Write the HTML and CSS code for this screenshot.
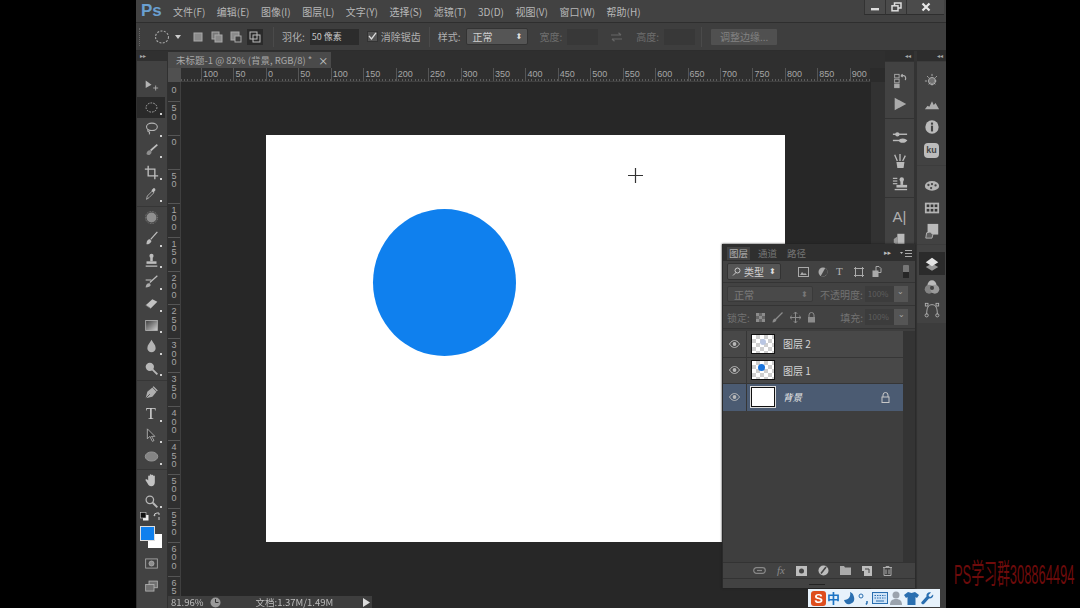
FILE: index.html
```html
<!DOCTYPE html>
<html lang="zh">
<head>
<meta charset="utf-8">
<title>Photoshop</title>
<link rel="stylesheet" href="styles.css">
</head>
<body>
<div class="side"></div>
<div class="app">
  <header class="menubar">
    <div class="logo">Ps</div>
    <nav class="menu">
      <span>文件(F)</span><span>编辑(E)</span><span>图像(I)</span><span>图层(L)</span><span>文字(Y)</span><span>选择(S)</span><span>滤镜(T)</span><span>3D(D)</span><span>视图(V)</span><span>窗口(W)</span><span>帮助(H)</span>
    </nav>
    <div class="winbtns">
      <div class="winbtn"><svg width="10" height="10" viewBox="0 0 10 10"><rect x="1" y="6" width="8" height="2.4" fill="#ddd"/></svg></div>
      <div class="winbtn"><svg width="11" height="10" viewBox="0 0 11 10" fill="none" stroke="#ddd" stroke-width="1.5"><rect x="3.5" y="1" width="6.5" height="5"/><rect x="1" y="3.8" width="6" height="5" fill="#4a4a4a"/></svg></div>
      <div class="winbtn close"><svg width="10" height="10" viewBox="0 0 10 10" stroke="#e8e8e8" stroke-width="2.2"><path d="M1.5 1.5l7 7M8.5 1.5l-7 7"/></svg></div>
    </div>
  </header>

  <div class="options">
    <div class="grip"></div>
    <svg class="opt-ellipse" width="16" height="14" viewBox="0 0 16 14" fill="none" stroke="#a8a8a8" stroke-width="1.1" stroke-dasharray="2 1.4"><ellipse cx="8" cy="7" rx="6.5" ry="6"/></svg>
    <svg class="opt-caret" width="6" height="4" viewBox="0 0 6 4"><path d="M0 0h6L3 4z" fill="#ccc"/></svg>
    <div class="modes">
      <span class="mode"><svg width="12" height="12" viewBox="0 0 12 12"><rect x="2" y="2" width="8" height="8" fill="#8a8a8a" stroke="#aaa"/></svg></span>
      <span class="mode"><svg width="12" height="12" viewBox="0 0 12 12"><rect x="1" y="1" width="7" height="7" fill="#777" stroke="#aaa"/><rect x="4" y="4" width="7" height="7" fill="#8a8a8a" stroke="#aaa"/></svg></span>
      <span class="mode"><svg width="12" height="12" viewBox="0 0 12 12"><rect x="1" y="1" width="8" height="8" fill="#8a8a8a" stroke="#aaa"/><rect x="5" y="5" width="6" height="6" fill="#3e3e3e" stroke="#aaa"/></svg></span>
      <span class="mode on"><svg width="12" height="12" viewBox="0 0 12 12" fill="none" stroke="#bbb"><rect x="1" y="1" width="7" height="7"/><rect x="4" y="4" width="7" height="7"/></svg></span>
    </div>
    <div class="vsep sep-a"></div>
    <span class="lbl feather">羽化:</span>
    <div class="field f-feather">50 像素</div>
    <div class="check"><svg width="9" height="9" viewBox="0 0 9 9" fill="none" stroke="#ddd" stroke-width="1.3"><path d="M1 4l2.5 3L8 .8"/></svg></div>
    <span class="lbl aa">消除锯齿</span>
    <div class="vsep sep-b"></div>
    <span class="lbl style">样式:</span>
    <div class="select s-style"><span>正常</span><i class="updown">⬍</i></div>
    <span class="lbl dim w-l">宽度:</span>
    <div class="field empty"></div>
    <svg class="swap" width="13" height="10" viewBox="0 0 13 10" fill="none" stroke="#666" stroke-width="1.2"><path d="M1 3h10M8.5 .8L11 3M12 7H2M4.500 9.200L2 7"/></svg>
    <span class="lbl dim h-l">高度:</span>
    <div class="field empty"></div>
    <div class="vsep sep-c"></div>
    <div class="refine">调整边缘...</div>
  </div>

  <div class="main">
    <aside class="toolcol">
      <div class="collapse">▸▸</div>
      <div class="tools">
        <div class="ghead"></div>
        <div class="tgroup">
          <div class="tool"><svg viewBox="0 0 18 18"><path d="M2 3l7 5-7 4z" fill="#c4c4c4"/><path d="M11 12h6M14 9v6" stroke="#c4c4c4"/></svg></div>
          <div class="tool on"><svg viewBox="0 0 18 18" fill="none" stroke="#cfcfcf" stroke-dasharray="2 1.300"><ellipse cx="9" cy="9" rx="6.500" ry="5.500"/></svg></div>
          <div class="tool"><svg viewBox="0 0 18 18" fill="none" stroke="#c4c4c4" stroke-width="1.300"><ellipse cx="9.500" cy="7" rx="6.500" ry="4.500"/><path d="M5 10c-1 2 0 3 1 3s1 2 0 3"/></svg></div>
          <div class="tool"><svg viewBox="0 0 18 18" fill="none"><path d="M16 2L8 9" stroke="#d0d0d0" stroke-width="2"/><path d="M3 13c0-3 3-5 5-4s1 4-1 5-4 0-4-1z" fill="#999"/></svg></div>
          <div class="tool"><svg viewBox="0 0 18 18" fill="none" stroke="#cfcfcf" stroke-width="1.600"><path d="M5 1v12h12M1 5h12v12"/></svg></div>
          <div class="tool"><svg viewBox="0 0 18 18"><path d="M3 16l1-4 6-6 2 2-6 6z" fill="none" stroke="#c8c8c8"/><path d="M9 5l2-2c1-2 4 1 2 3l-2 2z" fill="#d0d0d0"/></svg></div>
        </div>
        <div class="tgroup">
          <div class="tool"><svg viewBox="0 0 18 18"><circle cx="9" cy="9" r="6" fill="#9a9a9a"/><circle cx="9" cy="9" r="7.300" fill="none" stroke="#999" stroke-dasharray="1 1"/></svg></div>
          <div class="tool"><svg viewBox="0 0 18 18"><path d="M16 1L8 10" stroke="#d0d0d0" stroke-width="1.500"/><path d="M3 16c0-3 1-6 4-6l2 2c-1 3-3 4-6 4z" fill="#cfcfcf"/></svg></div>
          <div class="tool"><svg viewBox="0 0 18 18" fill="#cfcfcf"><circle cx="9" cy="3.500" r="2.500"/><rect x="7.500" y="5" width="3" height="5"/><rect x="3" y="10" width="12" height="3"/><rect x="2" y="15" width="14" height="1.500"/></svg></div>
          <div class="tool"><svg viewBox="0 0 18 18"><path d="M16 1L7 9" stroke="#d0d0d0" stroke-width="1.500"/><path d="M2 15c0-3 2-6 5-5l1 2c0 2-3 3-6 3z" fill="#bbb"/><path d="M2 6h7" stroke="#bbb" stroke-width="1.500"/></svg></div>
          <div class="tool"><svg viewBox="0 0 18 18"><path d="M2 11l8-7 6 3-8 8z" fill="#d4d4d4"/><path d="M2 11l6 4" stroke="#777"/></svg></div>
          <div class="tool"><svg viewBox="0 0 18 18"><defs><linearGradient id="grad" x1="0" y1="0" x2="1" y2="1"><stop offset="0" stop-color="#3a3a3a"/><stop offset="1" stop-color="#e4e4e4"/></linearGradient></defs><rect x="2" y="3" width="14" height="12" fill="url(#grad)" stroke="#c4c4c4"/></svg></div>
          <div class="tool"><svg viewBox="0 0 18 18"><path d="M9 1c2 4 5 6 5 10a5 5 0 0 1-10 0c0-4 3-6 5-10z" fill="#c4c4c4"/></svg></div>
          <div class="tool"><svg viewBox="0 0 18 18"><circle cx="7" cy="7" r="5" fill="#c8c8c8"/><path d="M10 10l6 6" stroke="#c8c8c8" stroke-width="2.200"/></svg></div>
        </div>
        <div class="tgroup">
          <div class="tool"><svg viewBox="0 0 18 18"><path d="M2 16l2-8 6-5 5 5-5 6z" fill="#bdbdbd"/><path d="M2 16l5-5" stroke="#444"/><path d="M11 2l5 5" stroke="#ccc" stroke-width="1.500"/></svg></div>
          <div class="tool ttext">T</div>
          <div class="tool"><svg viewBox="0 0 18 18"><path d="M4 1v12l3-3 3 6 2-1-3-5h4z" fill="#333" stroke="#c8c8c8"/></svg></div>
          <div class="tool"><svg viewBox="0 0 18 18"><ellipse cx="9" cy="9" rx="7.500" ry="5.500" fill="#8e8e8e" stroke="#aaa"/></svg></div>
        </div>
        <div class="tgroup last">
          <div class="tool"><svg viewBox="0 0 18 18" fill="#d4d4d4"><path d="M5 9V4a1 1 0 0 1 2 0V2.500a1 1 0 0 1 2 0V3a1 1 0 0 1 2 0v1a1 1 0 0 1 2 0v7c0 3-2 5-4 5-3 0-4-2-5-4L2 9c-1-2 2-2 3 0z"/></svg></div>
          <div class="tool t-zoom"><svg viewBox="0 0 18 18" fill="none" stroke="#c8c8c8" stroke-width="1.500"><circle cx="7" cy="7" r="4.500"/><path d="M10.500 10.500L16 16" stroke-width="2.400"/></svg></div>
        </div>
        <div class="swapset">
          <svg width="9" height="9" viewBox="0 0 9 9"><rect x="3" y="3" width="5.500" height="5.500" fill="#eee"/><rect x=".5" y=".5" width="5.500" height="5.500" fill="#111" stroke="#ccc" stroke-width=".6"/></svg>
          <svg width="9" height="9" viewBox="0 0 9 9" fill="none" stroke="#c8c8c8"><path d="M1 4a3 3 0 0 1 3-3h2M6 8V5M1 4l1.500-1M6 1v2"/></svg>
        </div>
        <div class="swatches"><div class="bgc"></div><div class="fgc"></div></div>
        <div class="tool mask"><svg viewBox="0 0 18 18" fill="none" stroke="#bdbdbd"><rect x="2" y="3.500" width="14" height="11"/><circle cx="9" cy="9" r="3" fill="#999"/></svg></div>
        <div class="tool screen"><svg viewBox="0 0 18 18" fill="#777" stroke="#c4c4c4"><rect x="6" y="2.500" width="10" height="8"/><rect x="2" y="6.500" width="10" height="8"/></svg></div>
      </div>
    </aside>

    <section class="docarea">
      <div class="tabrow"><div class="tab"><span>未标题-1 @ 82% (背景, RGB/8) *</span><b>×</b></div></div>
      <div class="hruler-row">
        <div class="corner"></div>
        <div class="hruler">
          <div class="hticks">
            <span></span><span>100</span><span>50</span><span>0</span><span>50</span><span>100</span><span>150</span><span>200</span><span>250</span><span>300</span><span>350</span><span>400</span><span>450</span><span>500</span><span>550</span><span>600</span><span>650</span><span>700</span><span>750</span><span>800</span><span>850</span><span>900</span>
          </div>
        </div>
      </div>
      <div class="body-row">
        <div class="vruler">
          <div class="vticks">
            <span class="vfirst">0</span><span>50</span><span>0</span><span>50</span><span>100</span><span>150</span><span>200</span><span>250</span><span>300</span><span>350</span><span>400</span><span>450</span><span>500</span><span>550</span><span>600</span><span>65</span>
          </div>
        </div>
        <div class="workspace">
          <div class="document">
            <div class="circle"></div>
            <svg class="cursor" width="15" height="15" viewBox="0 0 15 15"><path d="M7.500 0v15M0 7.500h15" stroke="#333" stroke-width="1.200"/></svg>
          </div>
        </div>
      </div>
      <footer class="status">
        <div class="st-left">
          <span class="zoom">81.96%</span>
          <span class="st-ico"><svg width="11" height="11" viewBox="0 0 11 11"><circle cx="5.500" cy="5.500" r="5" fill="#9a9a9a"/><path d="M5.500 2v3.500h3" stroke="#333" fill="none"/></svg></span>
          <span class="docinfo">文档:1.37M/1.49M</span>
          <svg class="st-arrow" width="7" height="9" viewBox="0 0 7 9"><path d="M0 0l7 4.500L0 9z" fill="#ddd"/></svg>
        </div>
      </footer>
    </section>

    <aside class="dock">
      <div class="dock-col">
        <div class="dock-head">◂◂</div>
        <div class="dgroup g56">
          <div class="dico"><svg viewBox="0 0 18 18" fill="none" stroke="#c0c0c0"><rect x="3" y="1.500" width="5" height="4"/><rect x="3" y="7" width="5" height="4"/><rect x="3" y="12.500" width="5" height="4" fill="#bbb"/><path d="M10 3h3c2 0 3 2 2 5M10 3l2-1.500M10 3l2 1.500" stroke-width="1.400"/></svg></div>
          <div class="dico"><svg viewBox="0 0 18 18"><path d="M3 2l13 7-13 7z" fill="#bdbdbd"/></svg></div>
        </div>
        <div class="dgroup g78">
          <div class="dico"><svg viewBox="0 0 18 18" fill="#cfcfcf"><rect x="1" y="4" width="16" height="1.600"/><rect x="1" y="11" width="16" height="1.600"/><circle cx="6" cy="5" r="2.400"/><ellipse cx="12" cy="12" rx="4" ry="2.400"/></svg></div>
          <div class="dico"><svg viewBox="0 0 18 18" fill="#cfcfcf"><path d="M5 10h9l-1 7H6z"/><path d="M6 9L3 2M9 9V1M12 9l3-6" stroke="#cfcfcf" stroke-width="1.500"/></svg></div>
          <div class="dico"><svg viewBox="0 0 18 18" fill="#cfcfcf"><rect x="1" y="2" width="5" height="1.300"/><rect x="1" y="5" width="5" height="1.300"/><rect x="1" y="8" width="5" height="1.300"/><circle cx="11" cy="4" r="2.500"/><rect x="9.500" y="5" width="3" height="5"/><rect x="5" y="10" width="12" height="3"/><rect x="3" y="14.500" width="14" height="1.500"/></svg></div>
        </div>
        <div class="dgroup g47">
          <div class="dico dtext">A|</div>
          <div class="dico"><svg viewBox="0 0 18 18"><rect x="6" y="2" width="8" height="14" fill="#cfcfcf"/><path d="M6 5L2 8v4l4 3z" fill="#aaa"/></svg></div>
        </div>
      </div>
      <div class="dock-col">
        <div class="dock-head">◂◂</div>
        <div class="dgroup g103">
          <div class="dico"><svg viewBox="0 0 18 18" fill="none" stroke="#c8c8c8"><circle cx="9" cy="9" r="4" fill="#777"/><path d="M9 1v16M1 9h16M3.500 3.500l11 11M14.500 3.500l-11 11" stroke-dasharray="2.500 8 2.500 8"/></svg></div>
          <div class="dico"><svg viewBox="0 0 18 18"><path d="M1 15l3-4 2 1 3-6 2 4 2-2 4 7z" fill="#c0c0c0"/></svg></div>
          <div class="dico"><svg viewBox="0 0 18 18"><circle cx="9" cy="9" r="7.500" fill="#d0d0d0"/><rect x="7.800" y="7.500" width="2.400" height="6.500" fill="#444"/><rect x="7.800" y="4" width="2.400" height="2.400" fill="#444"/></svg></div>
          <div class="dico ku"><span>ku</span></div>
        </div>
        <div class="dgroup g78">
          <div class="dico"><svg viewBox="0 0 18 18"><ellipse cx="9" cy="10" rx="8" ry="5.500" fill="#c8c8c8"/><circle cx="5" cy="9" r="1.300" fill="#444"/><circle cx="9" cy="8" r="1.300" fill="#444"/><circle cx="13" cy="9.500" r="1.300" fill="#444"/><circle cx="8" cy="12.500" r="1.300" fill="#444"/></svg></div>
          <div class="dico"><svg viewBox="0 0 18 18"><rect x="1" y="3" width="16" height="12" fill="#c8c8c8"/><g fill="#333"><rect x="3" y="5" width="3" height="3"/><rect x="7.500" y="5" width="3" height="3"/><rect x="12" y="5" width="3" height="3"/><rect x="3" y="10" width="3" height="3"/><rect x="7.500" y="10" width="3" height="3"/><rect x="12" y="10" width="3" height="3"/></g></svg></div>
          <div class="dico"><svg viewBox="0 0 18 18"><rect x="4" y="1" width="12" height="12" fill="#cfcfcf"/><path d="M2 17l1-6 4-1 3 3-1 4z" fill="#666" stroke="#cfcfcf"/></svg></div>
        </div>
        <div class="dgroup g78">
          <div class="dico active"><svg viewBox="0 0 18 18"><path d="M9 8.500L2 12.500l7 4 7-4z" fill="#999"/><path d="M9 2L2 7l7 4.500L16 7z" fill="#e4e4e4"/></svg></div>
          <div class="dico"><svg viewBox="0 0 18 18"><circle cx="9" cy="6.500" r="5" fill="#d0d0d0"/><circle cx="5.800" cy="11.500" r="5" fill="#8f8f8f"/><circle cx="12.200" cy="11.500" r="5" fill="#aaa"/><circle cx="9" cy="10" r="2.300" fill="#444"/></svg></div>
          <div class="dico"><svg viewBox="0 0 18 18" fill="none" stroke="#c8c8c8"><path d="M3 14C3 6 5 3 9 3s6 3 6 11"/><rect x="1.500" y="1.500" width="3" height="3"/><rect x="13.500" y="1.500" width="3" height="3"/><circle cx="3" cy="15" r="1.800"/><circle cx="15" cy="15" r="1.800"/></svg></div>
        </div>
      </div>
    </aside>

    <section class="layers">
      <div class="lp-tabs">
        <span class="lp-tab on">图层</span><span class="lp-tab">通道</span><span class="lp-tab">路径</span>
        <span class="lp-spacer"></span>
        <span class="lp-more">▸▸</span>
        <svg class="lp-menu" width="12" height="7" viewBox="0 0 12 7"><path d="M0 2h3L1.500 4z" fill="#bbb"/><path d="M5 .5h7M5 3.500h7M5 6.500h7" stroke="#aaa"/></svg>
      </div>
      <div class="lp-filter">
        <div class="select s-kind"><svg width="9" height="9" viewBox="0 0 9 9" fill="none" stroke="#ccc"><circle cx="5.500" cy="3.500" r="2.500"/><path d="M4 5.500L1 8.500"/></svg><span>类型</span><i class="updown">⬍</i></div>
        <div class="filter-icons">
          <svg width="11" height="10" viewBox="0 0 11 10"><rect x=".5" y=".5" width="10" height="9" fill="none" stroke="#aaa"/><path d="M2 8l2-3 2 2 1-1 2 2z" fill="#aaa"/></svg>
          <svg width="10" height="10" viewBox="0 0 10 10"><circle cx="5" cy="5" r="4.500" fill="#aaa"/><path d="M5 .5a4.500 4.500 0 0 1 0 9z" fill="#444" transform="rotate(30 5 5)"/></svg>
          <span class="fi-t">T</span>
          <svg width="10" height="10" viewBox="0 0 10 10" fill="none" stroke="#aaa"><rect x="1.500" y="1.500" width="7" height="7"/><path d="M0 1.500h3M1.500 0v3M7 1.500h3M8.500 0v3M0 8.500h3M1.500 7v3M7 8.500h3M8.500 7v3"/></svg>
          <svg width="10" height="11" viewBox="0 0 10 11" fill="none" stroke="#aaa"><path d="M4 .5h3l2 2v4H4z"/><rect x="1" y="5" width="5" height="5.500" fill="#aaa"/></svg>
        </div>
        <div class="toggle"><i></i></div>
      </div>
      <div class="lp-row dimrow">
        <div class="select s-mode"><span>正常</span><i class="updown">⬍</i></div>
        <span class="rlabel op">不透明度:</span>
        <div class="pct">100%</div><div class="pctbtn">⌄</div>
      </div>
      <div class="lp-row dimrow lockrow">
        <span class="rlabel lock">锁定:</span>
        <div class="lock-icons">
          <svg width="11" height="11" viewBox="0 0 11 11"><rect x="1" y="1" width="9" height="9" fill="#666"/><path d="M1 1h3v3H1zM7 1h3v3H7zM4 4h3v3H4zM1 7h3v3H1zM7 7h3v3H7z" fill="#8c8c8c"/></svg>
          <svg width="11" height="11" viewBox="0 0 11 11"><path d="M10.500.5L4 7" stroke="#8c8c8c" stroke-width="1.200"/><path d="M.5 10.500c0-2 1-4 3-4l1 1c0 2-2 3-4 3z" fill="#8c8c8c"/></svg>
          <svg width="11" height="11" viewBox="0 0 11 11" stroke="#8c8c8c" fill="none"><path d="M5.500 0v11M0 5.500h11M3.800 1.800L5.500 0l1.700 1.800M3.800 9.200L5.500 11l1.700-1.800M1.800 3.800L0 5.500l1.800 1.700M9.200 3.800L11 5.500 9.200 7.200"/></svg>
          <svg width="9" height="11" viewBox="0 0 9 11"><path d="M2 5V3a2.500 2.500 0 0 1 5 0v2" fill="none" stroke="#8c8c8c"/><rect x="1" y="5" width="7" height="5.500" fill="#8c8c8c"/></svg>
        </div>
        <span class="rlabel fill">填充:</span>
        <div class="pct">100%</div><div class="pctbtn">⌄</div>
      </div>
      <div class="lp-list">
        <div class="list-main">
          <div class="layer">
            <div class="eye"><svg width="11" height="8" viewBox="0 0 11 8"><path d="M.5 4C2 1.500 4 .5 5.500 .5S9 1.500 10.500 4C9 6.500 7 7.500 5.500 7.500S2 6.500 .5 4z" fill="none" stroke="#b8b8b8"/><circle cx="5.500" cy="4" r="1.900" fill="#b8b8b8"/></svg></div>
            <div class="thumb check-bg"><i class="smudge"></i></div>
            <div class="lname">图层 2</div>
          </div>
          <div class="layer">
            <div class="eye"><svg width="11" height="8" viewBox="0 0 11 8"><path d="M.5 4C2 1.500 4 .5 5.500 .5S9 1.500 10.500 4C9 6.500 7 7.500 5.500 7.500S2 6.500 .5 4z" fill="none" stroke="#b8b8b8"/><circle cx="5.500" cy="4" r="1.900" fill="#b8b8b8"/></svg></div>
            <div class="thumb check-bg"><i class="dot"></i></div>
            <div class="lname">图层 1</div>
          </div>
          <div class="layer selected">
            <div class="eye"><svg width="11" height="8" viewBox="0 0 11 8"><path d="M.5 4C2 1.500 4 .5 5.500 .5S9 1.500 10.500 4C9 6.500 7 7.500 5.500 7.500S2 6.500 .5 4z" fill="none" stroke="#b8b8b8"/><circle cx="5.500" cy="4" r="1.900" fill="#b8b8b8"/></svg></div>
            <div class="thumb white"></div>
            <div class="lname bgname">背景</div>
            <svg class="layer-lock" width="9" height="11" viewBox="0 0 9 11"><path d="M2 5V3a2.500 2.500 0 0 1 5 0v2" fill="none" stroke="#c8c8c8"/><rect x="1" y="5" width="7" height="5.500" fill="none" stroke="#c8c8c8"/></svg>
          </div>
        </div>
        <div class="list-scroll"></div>
      </div>
      <div class="lp-foot">
        <svg width="13" height="7" viewBox="0 0 13 7" fill="none" stroke="#888" stroke-width="1.200"><rect x=".7" y=".7" width="11.600" height="5.600" rx="2.800"/><path d="M4 3.500h5"/></svg>
        <span class="fx">fx</span>
        <svg width="11" height="10" viewBox="0 0 11 10"><rect width="11" height="10" fill="#bdbdbd"/><circle cx="5.500" cy="5" r="2.500" fill="#444"/></svg>
        <svg width="11" height="11" viewBox="0 0 11 11"><circle cx="5.500" cy="5.500" r="5" fill="#bdbdbd"/><path d="M8 2L3 8.500" stroke="#444" stroke-width="1.600"/></svg>
        <svg width="11" height="9" viewBox="0 0 11 9"><path d="M0 0h4l1 1.500h6V9H0z" fill="#aaa"/></svg>
        <svg width="10" height="10" viewBox="0 0 10 10"><path d="M0 0h10v10H2V5H0z" fill="#bdbdbd"/><path d="M3 3h4v4" stroke="#444" fill="none"/></svg>
        <svg width="9" height="10" viewBox="0 0 9 10" fill="none" stroke="#aaa"><path d="M0 1.500h9M3 1.500V.5h3v1M1 1.500h7V9.500H1zM3 3.500v4.500M6 3.500v4.500"/></svg>
      </div>
      <div class="lp-end"><i></i></div>
    </section>
  </div>
</div>
<div class="side right">
  <div class="watermark">PS学习群308864494</div>
</div>
<div class="tray">
  <span class="sogou">S</span>
  <span class="zh">中</span>
  <svg width="13" height="13" viewBox="0 0 13 13"><path d="M8 0c1 4-1 8-6 8 1 3 3 5 6 4s5-3 4-7-2-4-4-5z" fill="#2a6fb0"/></svg>
  <svg width="13" height="13" viewBox="0 0 13 13" fill="none" stroke="#2a6fb0"><circle cx="4" cy="4" r="2"/><path d="M10 9v2l-1 1.500" stroke-width="1.500"/></svg>
  <svg width="16" height="12" viewBox="0 0 16 12"><rect x=".5" y=".5" width="15" height="11" fill="#cfe4f7" stroke="#2a6fb0"/><path d="M2.500 3.500h11M2.500 6h11" stroke="#2a6fb0" stroke-dasharray="1.500 1"/><path d="M4 9h8" stroke="#2a6fb0"/></svg>
  <svg width="12" height="14" viewBox="0 0 12 14" fill="#9aa3ad"><circle cx="6" cy="4" r="3.500"/><path d="M0 14c0-4 2-6 6-6s6 2 6 6z"/></svg>
  <svg width="15" height="13" viewBox="0 0 15 13"><path d="M4 0l3.500 1L11 0l4 3-2 3-1.500-1v8h-8V5L2 6 0 3z" fill="#2a6fb0"/></svg>
  <svg width="13" height="13" viewBox="0 0 13 13"><path d="M12 2.500L9.500 5 8 4.500 7.500 3 10 .5C7.500-.5 5 1.500 5.500 4.500L.5 10c-1 1.500 1 3 2.500 2l5-5.500c3 .5 5-2 4-4z" fill="#2a6fb0"/></svg>
</div>
</body>
</html>
```

FILE: styles.css
```css
* { box-sizing: border-box; }
html, body { margin: 0; padding: 0; }
body {
  width: 1080px; height: 608px; overflow: hidden; background: #000;
  display: flex; position: relative;
  font-family: "Noto Sans CJK SC", "Liberation Sans", sans-serif;
  color: #b4b4b4; font-size: 10px;
}
.side { width: 136px; flex: none; background: #000; }
.side.right { width: 134px; display: flex; align-items: flex-start; }
.watermark {
  margin: 556px 0 0 8px; font-size: 28px; line-height: 38px; white-space: nowrap;
  color: #6e0b0b; transform: scaleX(.46); transform-origin: 0 50%;
  font-family: "Liberation Sans", "Noto Sans CJK SC", sans-serif;
}
.app {
  width: 810px; height: 608px; flex: none; background: #3c3c3c;
  display: flex; flex-direction: column; filter: blur(.5px);
}

/* menu */
.menubar { height: 23px; flex: none; display: flex; background: #424242; border-bottom: 1px solid #2e2e2e; }
.logo { width: 37px; padding-left: 5px; font: bold 17px/21px "Liberation Sans", sans-serif; color: #6a9fd0; }
.menu { display: flex; gap: 11.5px; line-height: 24px; font-size: 10px; white-space: nowrap; color: #b8b8b8; }
.winbtns { margin-left: auto; margin-right: 2px; display: flex; height: 15px; }
.winbtn { width: 21px; background: #4b4b4b; border-left: 1px solid #333; border-bottom: 1px solid #2e2e2e; display: flex; align-items: center; justify-content: center; }
.winbtn.close { width: 38px; }

/* options */
.options { height: 28px; flex: none; display: flex; align-items: center; background: #3e3e3e; border-bottom: 1px solid #2d2d2d; white-space: nowrap; }
.grip { width: 3px; height: 18px; margin-left: 3px; border-left: 1px dotted #666; }
.opt-ellipse { margin-left: 12px; }
.opt-caret { margin-left: 5px; }
.modes { display: flex; margin-left: 9px; gap: 3px; }
.mode { width: 16px; height: 16px; display: flex; align-items: center; justify-content: center; }
.mode.on { background: #2a2a2a; }
.vsep { width: 1px; height: 20px; background: #2c2c2c; border-right: 1px solid #4a4a4a; }
.sep-a { margin-left: 10px; }
.lbl { color: #b0b0b0; font-size: 10px; }
.lbl.dim { color: #6e6e6e; }
.feather { margin-left: 8px; }
.field { background: #2c2c2c; height: 16px; line-height: 16px; color: #c4c4c4; font-size: 9px; padding-left: 2px; margin-left: 5px; }
.f-feather { width: 49px; }
.field.empty { width: 31px; background: #383838; }
.check { width: 11px; height: 11px; margin-left: 8px; background: #555; border: 1px solid #333; display: flex; align-items: center; justify-content: center; }
.aa { margin-left: 3px; }
.sep-b { margin-left: 8px; }
.style { margin-left: 8px; }
.select { height: 17px; display: flex; align-items: center; background: #555; border-radius: 2px; padding: 0 4px 0 6px; color: #d0d0d0; font-size: 10px; border: 1px solid #333; }
.select span { flex: 1; }
.updown { font-style: normal; font-size: 8px; color: #ddd; font-family: "DejaVu Sans", sans-serif; }
.s-style { width: 62px; margin-left: 5px; }
.w-l { margin-left: 12px; }
.swap { margin: 0 13px 0 12px; }
.sep-c { margin-left: 6px; }
.refine { margin-left: 9px; width: 66px; height: 16px; background: #505050; color: #828282; line-height: 16px; text-align: center; font-size: 10px; border-radius: 1px; }

/* main */
.main { flex: 1; min-height: 0; display: flex; position: relative; background: #2b2b2b; }
.toolcol { width: 32px; flex: none; background: #303030; display: flex; flex-direction: column; }
.collapse { height: 10px; line-height: 10px; font-size: 6px; color: #aaa; padding-left: 4px; font-family: "DejaVu Sans", sans-serif; }
.tools { flex: 1; width: 30px; margin-left: 1px; background: #424242; display: flex; flex-direction: column; }
.ghead { height: 14px; flex: none; }
.tgroup { display: flex; flex-direction: column; border-bottom: 1px solid #363636; padding-bottom: 1px; }
.tgroup.last { border-bottom: 0; padding-bottom: 0; }
.tool { height: 21.6px; width: 28px; flex: none; display: flex; align-items: center; justify-content: center; position: relative; }
.tool svg { width: 15px; height: 15px; opacity: .88; }
.tool.on { background: #2a2a2a; }
.tool.t-zoom { height: 20px; }
.tool:not(.mask):not(.screen):not(:first-child)::after,
.tool.on::after {
  content: ""; position: absolute; right: 3px; bottom: 3px; width: 2px; height: 2px; background: #d0d0d0;
}
.ttext { font: 16px/20px "Liberation Serif", serif; color: #d0d0d0; }
.swapset { height: 11px; flex: none; display: flex; justify-content: space-between; padding: 1px 5px 0 3px; }
.swatches { height: 27px; flex: none; position: relative; margin-top: 1px; }
.fgc { position: absolute; left: 3px; top: 3px; width: 15px; height: 15px; background: #0f80ee; border: 1px solid #ddd; }
.bgc { position: absolute; left: 11px; top: 11px; width: 14px; height: 14px; background: #fff; }
.mask { margin-top: 2px; height: 22px; }
.screen { margin-top: 1px; height: 22px; }

/* doc */
.docarea { flex: 1; min-width: 0; display: flex; flex-direction: column; }
.tabrow { height: 17px; flex: none; background: #2f2f2f; padding-top: 1px; }
.tab { width: 163px; height: 16px; background: #4a4a4a; display: flex; align-items: center; padding-left: 8px; white-space: nowrap; font-size: 9.5px; color: #a8a8a8; }
.tab b { margin-left: 6px; font-weight: normal; color: #ccc; font-size: 10px; }
.hruler-row { height: 14px; flex: none; display: flex; margin-right: 15px; }
.corner { width: 13px; flex: none; background: #505050; }
.hruler { flex: 1; overflow: hidden; background: #2f2f2f; border-bottom: 1px solid #3f3f3f;
  background-image: repeating-linear-gradient(90deg, #5c5c5c 0 1px, transparent 1px 3.245px);
  background-size: 100% 2px; background-repeat: no-repeat; background-position: 0 100%; }
.hticks { display: flex; margin-left: -12.400px; }
.hticks span { flex: none; width: 32.45px; height: 13px; padding-left: 1px; border-left: 1px solid #555; font: 9px/13px "Liberation Sans", sans-serif; color: #a6a6a6; }
.body-row { flex: 1; min-height: 0; display: flex; }
.vruler { width: 13px; flex: none; overflow: hidden; background: #2f2f2f; border-right: 1px solid #3f3f3f; }
.vticks { display: flex; flex-direction: column; margin-top: -14.800px; }
.vticks span { flex: none; height: 33.9px; width: 12px; padding: 2px 3px 0; border-top: 1px solid #555; word-break: break-all; text-align: center; font: 9px/8.500px "Liberation Sans", sans-serif; color: #a6a6a6; }
.vticks .vfirst { padding-top: 18.500px; border-top: 0; }
.workspace { flex: 1; min-width: 0; background: #272727; padding: 53px 0 0 85px; border-right: 14px solid #323232; }
.document { width: 519px; height: 407px; background: #fff; position: relative; }
.circle { position: absolute; left: 107px; top: 74px; width: 143px; height: 147px; border-radius: 50%; background: #0f80ee; }
.cursor { position: absolute; left: 362px; top: 33px; }
.status { height: 12px; flex: none; background: #272727; font: 9.500px/12px "Noto Sans CJK SC", "Liberation Sans", sans-serif; color: #bdbdbd; }
.st-left { width: 204px; height: 12px; background: #3e3e3e; display: flex; align-items: center; padding-left: 3px; white-space: nowrap; }
.st-ico { margin-left: 7px; display: flex; }
.docinfo { margin-left: 34px; }
.st-arrow { margin-left: 30px; }

/* dock */
.dock { width: 61px; flex: none; display: flex; gap: 3px; padding-left: 0; background: #333; }
.dock-col { width: 29px; flex: none; display: flex; flex-direction: column; gap: 1px; }
.dock-col:last-child { background: #3c3c3c; }
.dock-head { height: 10px; background: #2d2d2d; font: 6px/10px "DejaVu Sans", sans-serif; color: #aaa; text-align: right; padding-right: 3px; }
.dgroup { background: #424242; padding-top: 7px; flex: none; display: flex; flex-direction: column; align-items: center; }
.g56 { height: 56px; }
.g78 { height: 78px; }
.g47 { height: 50px; }
.g103 { height: 103px; }
.dico { width: 26px; height: 23.3px; flex: none; display: flex; align-items: center; justify-content: center; }
.dico svg { width: 16px; height: 16px; opacity: .85; }
.dico.active svg { opacity: 1; }
.dico.active { background: #2b2b2b; }
.dtext { font: 15px/20px "Liberation Sans", sans-serif; color: #b0b0b0; }
.ku span { width: 15px; height: 15px; background: #bcbcbc; border-radius: 4px; color: #444; font: bold 9px/15px "Liberation Sans", sans-serif; text-align: center; }

/* layers */
.layers { position: absolute; left: 586px; top: 193px; width: 193px; height: 344px; background: #3e3e3e; display: flex; flex-direction: column; border-left: 1px solid #2a2a2a; box-shadow: 0 0 2px #1c1c1c; }
.lp-tabs { height: 17px; flex: none; display: flex; align-items: flex-end; background: #2f2f2f; padding: 0 3px 1px 4px; white-space: nowrap; }
.lp-tab { padding: 0 2px; height: 13px; line-height: 13px; font-size: 9.500px; color: #757575; margin-right: 6px; }
.lp-tab.on { background: #424242; color: #b0b0b0; }
.lp-spacer { flex: 1; }
.lp-more { font: 7px/13px "DejaVu Sans", sans-serif; color: #bbb; margin-right: 9px; }
.lp-menu { margin-bottom: 3px; }
.lp-filter { height: 22px; flex: none; display: flex; align-items: center; padding: 0 6px 0 4px; background: #424242; border-bottom: 1px solid #343434; }
.s-kind { width: 54px; gap: 3px; padding-left: 4px; height: 17px; }
.filter-icons { display: flex; align-items: center; gap: 8.500px; margin-left: 17px; }
.fi-t { font: 11px/11px "Liberation Serif", serif; color: #b4b4b4; width: 9px; }
.toggle { margin-left: auto; width: 6px; height: 13px; background: #777; border-radius: 1px; position: relative; }
.toggle i { position: absolute; left: 0; right: 0; bottom: 0; height: 6px; background: #262626; }
.lp-row { height: 23px; flex: none; display: flex; align-items: center; padding: 0 4px; background: #424242; border-bottom: 1px solid #343434; }
.dimrow { color: #727272; }
.dimrow .select { color: #7a7a7a; background: #494949; border-color: #3a3a3a; }
.dimrow .updown { color: #777; }
.s-mode { width: 86px; height: 16px; }
.rlabel { font-size: 10px; white-space: nowrap; }
.op { margin-left: 7px; }
.pct { width: 29px; height: 16px; margin-left: 2px; background: #3c3c3c; color: #5e5e5e; font-size: 8px; line-height: 16px; padding-left: 3px; }
.pctbtn { width: 14px; height: 16px; background: #555; color: #aaa; font: 8px/12px "Liberation Sans", sans-serif; text-align: center; }
.lock-icons { display: flex; align-items: center; gap: 6.500px; margin-left: 5px; }
.fill { margin-left: 24px; }
.lp-list { flex: 1; min-height: 0; display: flex; background: #3e3e3e; padding-top: 2px; }
.list-main { flex: 1; }
.list-scroll { width: 12px; background: #343434; }
.layer { height: 26.5px; display: flex; align-items: center; background: #484848; border-bottom: 1px solid #363636; position: relative; }
.eye { width: 24px; align-self: stretch; display: flex; align-items: center; justify-content: center; border-right: 1px solid #363636; }
.thumb { width: 24px; height: 20px; margin-left: 4px; border: 1px solid #111; position: relative; flex: none; }
.check-bg { background: repeating-conic-gradient(#cfcfcf 0 25%, #fff 0 50%) 0 0 / 8px 8px; }
.dot { position: absolute; left: 6px; top: 3px; width: 7px; height: 7px; border-radius: 50%; background: #1a74dc; }
.smudge { position: absolute; left: 8px; top: 4px; width: 6px; height: 6px; border-radius: 50%; background: #b9c6e2; }
.thumb.white { background: #fff; outline: 1px solid #ddd; outline-offset: 0; }
.lname { margin-left: 8px; font-size: 10px; color: #d4d4d4; }
.selected { background: #4b5b72; border-bottom: 0; }
.bgname { font-style: italic; color: #e4e4e4; font-size: 9.500px; }
.layer-lock { position: absolute; right: 13px; top: 8px; }
.lp-foot { height: 17px; flex: none; display: flex; align-items: center; justify-content: flex-end; gap: 11px; padding-right: 23px; background: #424242; border-top: 1px solid #333; border-bottom: 1px solid #333; }
.fx { font: italic 11px/11px "Liberation Serif", serif; color: #8a8a8a; }
.lp-end { height: 9px; flex: none; background: #424242; position: relative; }
.lp-end i { position: absolute; left: 86px; bottom: 3px; width: 16px; height: 1px; background: #222; }

/* tray */
.tray { position: absolute; left: 808px; top: 589px; width: 132px; height: 18px; background: #e7f2fb; display: flex; align-items: center; gap: 2px; padding-left: 3px; }
.sogou { width: 15px; height: 15px; background: #de4d1d; color: #fff; border-radius: 3px; font: bold 13px/15px "Liberation Sans", sans-serif; text-align: center; flex: none; }
.zh { color: #1c74c4; font-size: 13px; line-height: 18px; font-weight: bold; margin-left: -1px; }
```
